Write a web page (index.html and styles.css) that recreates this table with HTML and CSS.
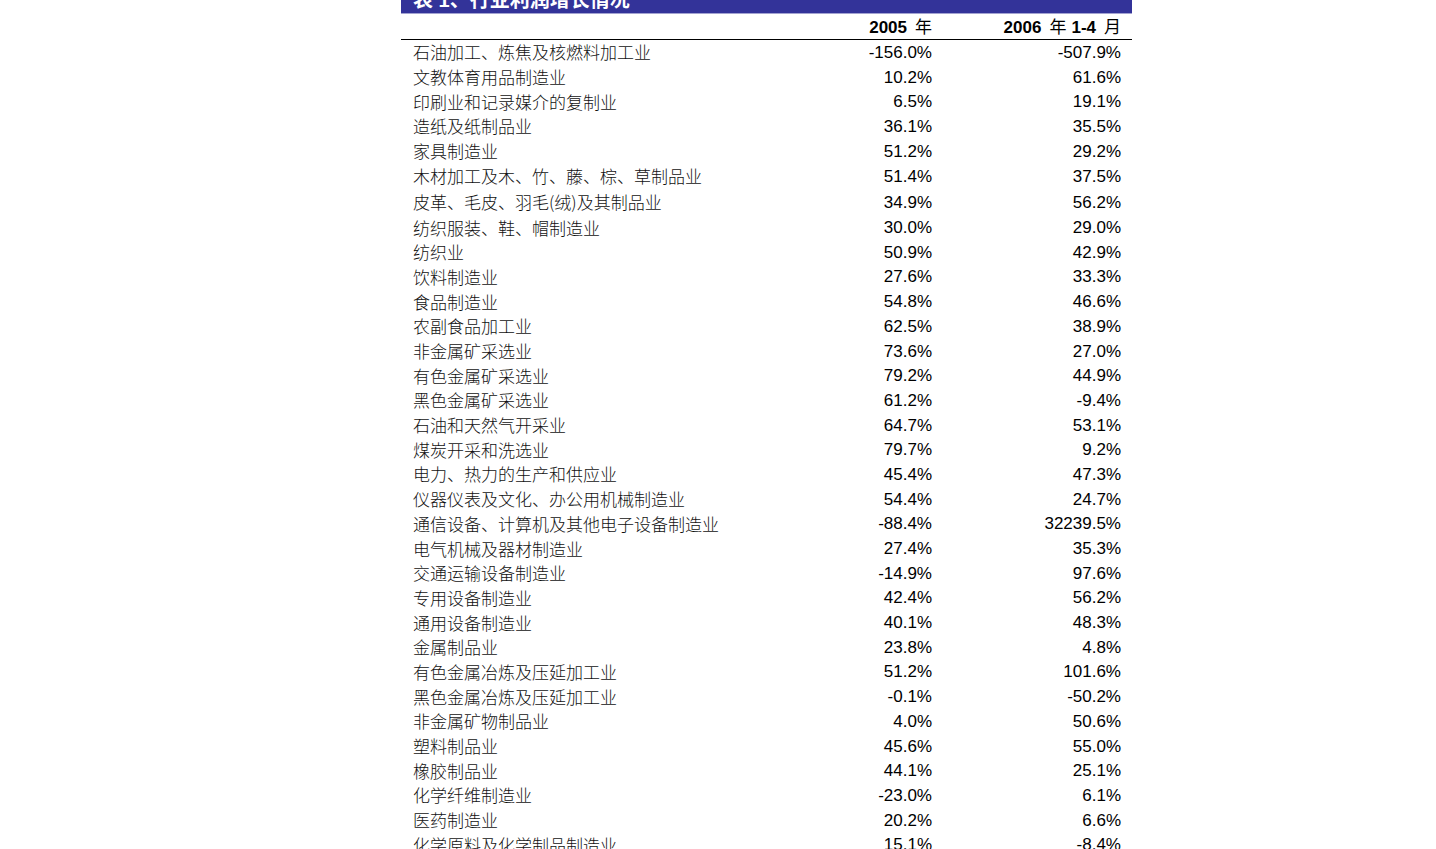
FILE: index.html
```html
<!DOCTYPE html>
<html lang="zh-CN">
<head>
<meta charset="utf-8">
<title>表 1、行业利润增长情况</title>
<link rel="stylesheet" href="styles.css">
</head>
<body>
<div class="page">
  <div class="sheet">
    <div class="titlebar"><span class="title">表 1、行业利润增长情况</span></div>
    <div class="row head">
      <div class="name"></div>
      <div class="num"><b>2005</b><span class="gap">年</span></div>
      <div class="num"><b>2006</b><span class="gap">年</span><b class="gap-s">1-4</b><span class="gap">月</span></div>
    </div>
    <div class="body">
      <div class="row"><div class="name">石油加工、炼焦及核燃料加工业</div><div class="num">-156.0%</div><div class="num">-507.9%</div></div>
      <div class="row"><div class="name">文教体育用品制造业</div><div class="num">10.2%</div><div class="num">61.6%</div></div>
      <div class="row"><div class="name">印刷业和记录媒介的复制业</div><div class="num">6.5%</div><div class="num">19.1%</div></div>
      <div class="row"><div class="name">造纸及纸制品业</div><div class="num">36.1%</div><div class="num">35.5%</div></div>
      <div class="row"><div class="name">家具制造业</div><div class="num">51.2%</div><div class="num">29.2%</div></div>
      <div class="row tall"><div class="name">木材加工及木、竹、藤、棕、草制品业</div><div class="num">51.4%</div><div class="num">37.5%</div></div>
      <div class="row tall"><div class="name">皮革、毛皮、羽毛(绒)及其制品业</div><div class="num">34.9%</div><div class="num">56.2%</div></div>
      <div class="row"><div class="name">纺织服装、鞋、帽制造业</div><div class="num">30.0%</div><div class="num">29.0%</div></div>
      <div class="row"><div class="name">纺织业</div><div class="num">50.9%</div><div class="num">42.9%</div></div>
      <div class="row"><div class="name">饮料制造业</div><div class="num">27.6%</div><div class="num">33.3%</div></div>
      <div class="row"><div class="name">食品制造业</div><div class="num">54.8%</div><div class="num">46.6%</div></div>
      <div class="row"><div class="name">农副食品加工业</div><div class="num">62.5%</div><div class="num">38.9%</div></div>
      <div class="row"><div class="name">非金属矿采选业</div><div class="num">73.6%</div><div class="num">27.0%</div></div>
      <div class="row"><div class="name">有色金属矿采选业</div><div class="num">79.2%</div><div class="num">44.9%</div></div>
      <div class="row"><div class="name">黑色金属矿采选业</div><div class="num">61.2%</div><div class="num">-9.4%</div></div>
      <div class="row"><div class="name">石油和天然气开采业</div><div class="num">64.7%</div><div class="num">53.1%</div></div>
      <div class="row"><div class="name">煤炭开采和洗选业</div><div class="num">79.7%</div><div class="num">9.2%</div></div>
      <div class="row"><div class="name">电力、热力的生产和供应业</div><div class="num">45.4%</div><div class="num">47.3%</div></div>
      <div class="row"><div class="name">仪器仪表及文化、办公用机械制造业</div><div class="num">54.4%</div><div class="num">24.7%</div></div>
      <div class="row"><div class="name">通信设备、计算机及其他电子设备制造业</div><div class="num">-88.4%</div><div class="num">32239.5%</div></div>
      <div class="row"><div class="name">电气机械及器材制造业</div><div class="num">27.4%</div><div class="num">35.3%</div></div>
      <div class="row"><div class="name">交通运输设备制造业</div><div class="num">-14.9%</div><div class="num">97.6%</div></div>
      <div class="row"><div class="name">专用设备制造业</div><div class="num">42.4%</div><div class="num">56.2%</div></div>
      <div class="row"><div class="name">通用设备制造业</div><div class="num">40.1%</div><div class="num">48.3%</div></div>
      <div class="row"><div class="name">金属制品业</div><div class="num">23.8%</div><div class="num">4.8%</div></div>
      <div class="row"><div class="name">有色金属冶炼及压延加工业</div><div class="num">51.2%</div><div class="num">101.6%</div></div>
      <div class="row"><div class="name">黑色金属冶炼及压延加工业</div><div class="num">-0.1%</div><div class="num">-50.2%</div></div>
      <div class="row"><div class="name">非金属矿物制品业</div><div class="num">4.0%</div><div class="num">50.6%</div></div>
      <div class="row"><div class="name">塑料制品业</div><div class="num">45.6%</div><div class="num">55.0%</div></div>
      <div class="row"><div class="name">橡胶制品业</div><div class="num">44.1%</div><div class="num">25.1%</div></div>
      <div class="row"><div class="name">化学纤维制造业</div><div class="num">-23.0%</div><div class="num">6.1%</div></div>
      <div class="row"><div class="name">医药制造业</div><div class="num">20.2%</div><div class="num">6.6%</div></div>
      <div class="row"><div class="name">化学原料及化学制品制造业</div><div class="num">15.1%</div><div class="num">-8.4%</div></div>
    </div>
  </div>
</div>
</body>
</html>
```

FILE: styles.css
```css
html, body {
  margin: 0;
  padding: 0;
  background: #ffffff;
}

.page {
  padding-left: 401px;
  height: 849px;
  overflow: hidden;
}

.sheet {
  width: 731px;
  color: #000;
  font-family: "Liberation Sans", "Noto Sans CJK SC", sans-serif;
}

.titlebar {
  height: 13px;
  background: #333399;
  border-bottom: 1px solid #a3a3d1;
  overflow: hidden;
  padding-left: 12px;
}

.title {
  display: block;
  margin-top: -12px;
  color: #ffffff;
  font-weight: bold;
  font-size: 20px;
  line-height: 24px;
  font-family: "Liberation Sans", "Noto Sans CJK SC", sans-serif;
}

.row {
  display: grid;
  grid-template-columns: 1fr 120px 189px;
  padding: 0 11px 0 12px;
  height: 24.7px;
  align-items: center;
  font-size: 17px;
  line-height: 20px;
}

.row.tall {
  height: 25.9px;
}

.head {
  height: 25px;
  border-bottom: 1px solid #000;
}

.head b {
  font-weight: bold;
}

.head .gap {
  margin-left: 8px;
  font-family: "Noto Sans CJK SC", sans-serif;
}

.head .gap-s {
  margin-left: 5px;
}

.name {
  font-family: "Noto Sans CJK SC", sans-serif;
  font-weight: 300;
  white-space: nowrap;
  color: #111;
}

.num {
  text-align: right;
  white-space: nowrap;
  padding-top: 1px;
}
```
